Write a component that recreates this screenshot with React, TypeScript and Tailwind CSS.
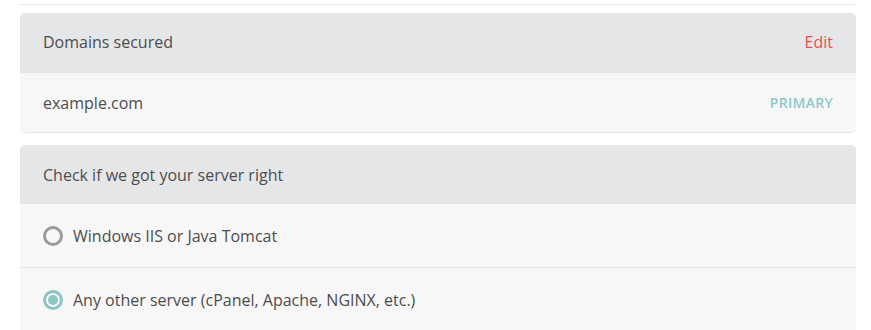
import React from "react";

function Radio({ checked }: { checked: boolean }) {
  return checked ? (
    <span className="flex h-[20px] w-[20px] items-center justify-center rounded-full border-[3px] border-[#8cc5c5]">
      <span className="h-[10px] w-[10px] rounded-full bg-[#8cc5c5]" />
    </span>
  ) : (
    <span className="h-[20px] w-[20px] rounded-full border-[3px] border-[#9a9a9a]" />
  );
}

export default function App() {
  return (
    <div
      className="min-h-[330px] bg-white pl-[20px] pr-[15px] pt-[4px] text-[16px] leading-[20px] text-[#4d4d4d]"
      style={{ fontFamily: '"Open Sans", "Liberation Sans", sans-serif' }}
    >
      <div className="mr-[1px] h-px bg-[#e8e8e8]" />
      <div className="mt-[8px] overflow-hidden rounded-[5px] border-b border-[#e4e4e4]">
        <div className="flex h-[60px] items-center justify-between bg-[#e5e6e8] px-[23px] pb-[2px]">
          <span>Domains secured</span>
          <span className="text-[#f04b55]">Edit</span>
        </div>
        <div className="flex h-[59px] items-center justify-between bg-[#f7f7f7] px-[23px]">
          <span>example.com</span>
          <span className="text-[14px] font-semibold tracking-[0.02em] text-[#8ec9c9]">PRIMARY</span>
        </div>
      </div>
      <div className="mt-[12px] overflow-hidden rounded-t-[5px]">
        <div className="flex h-[59px] items-center bg-[#e5e6e8] px-[23px]">
          <span>Check if we got your server right</span>
        </div>
        <div className="flex h-[64px] items-center gap-[10px] border-b border-[#e4e4e4] bg-[#f7f7f7] px-[23px]">
          <Radio checked={false} />
          <span>Windows IIS or Java Tomcat</span>
        </div>
        <div className="flex h-[64px] items-center gap-[10px] bg-[#f7f7f7] px-[23px]">
          <Radio checked={true} />
          <span>Any other server (cPanel, Apache, NGINX, etc.)</span>
        </div>
      </div>
    </div>
  );
}
